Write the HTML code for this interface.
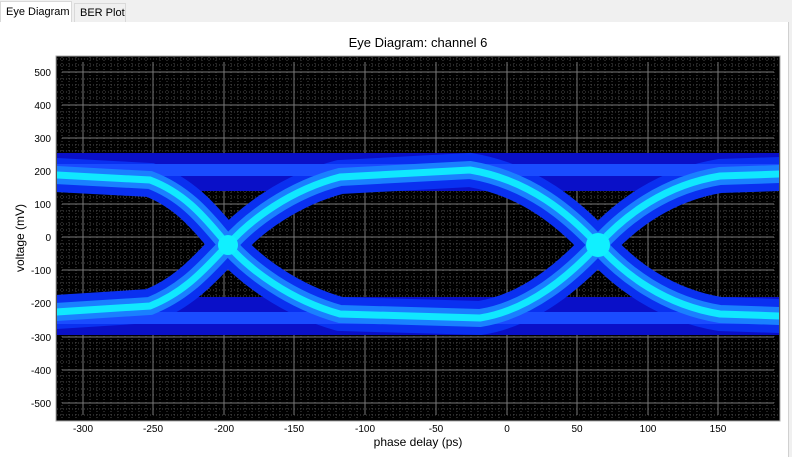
<!DOCTYPE html>
<html><head><meta charset="utf-8"><style>
body{margin:0;width:792px;height:457px;background:#f0f0f0;font-family:"Liberation Sans",sans-serif;overflow:hidden;position:relative}
.tabbar{position:absolute;left:0;top:0;width:792px;height:22px;background:#f0f0f0}
.tab{position:absolute;font-size:11px;color:#000;border:1px solid #d9d9d9;border-bottom:none;white-space:nowrap;overflow:hidden}
.panel{position:absolute;left:0;top:22px;width:788px;height:435px;background:#fff;border-right:1px solid #d0d0d0}
</style></head><body>
<div class="tabbar">
<div class="tab" style="left:0;top:1px;width:72px;height:21px;background:#fff;line-height:20px;padding-left:5px;box-sizing:border-box">Eye Diagram</div>
<div class="tab" style="left:74px;top:3px;width:52px;height:19px;background:#f0f0f0;line-height:19px;padding-left:5px;box-sizing:border-box">BER Plot</div>
</div>
<div class="panel"></div>
<svg width="792" height="457" style="position:absolute;left:0;top:0" font-family="Liberation Sans, sans-serif">
<defs>
<clipPath id="c"><rect x="57" y="57" width="722" height="363"/></clipPath>
</defs>
<text x="418" y="47" font-size="13" text-anchor="middle" fill="#000">Eye Diagram: channel 6</text>
<rect x="56" y="56" width="724" height="365" fill="#000" stroke="#aaa"/>
<g stroke="#4a4a4a" stroke-width="1" stroke-dasharray="1,2" clip-path="url(#c)">
<path d="M62 57V420M69 57V420M76 57V420M90 57V420M97 57V420M104 57V420M111 57V420M118 57V420M125 57V420M132 57V420M139 57V420M146 57V420M160 57V420M167 57V420M174 57V420M181 57V420M188 57V420M195 57V420M202 57V420M209 57V420M216 57V420M231 57V420M238 57V420M245 57V420M252 57V420M259 57V420M266 57V420M273 57V420M280 57V420M287 57V420M301 57V420M308 57V420M315 57V420M322 57V420M329 57V420M336 57V420M343 57V420M350 57V420M357 57V420M372 57V420M379 57V420M386 57V420M393 57V420M400 57V420M407 57V420M414 57V420M421 57V420M428 57V420M443 57V420M450 57V420M457 57V420M464 57V420M471 57V420M478 57V420M485 57V420M492 57V420M499 57V420M514 57V420M521 57V420M528 57V420M535 57V420M542 57V420M549 57V420M556 57V420M563 57V420M570 57V420M584 57V420M591 57V420M598 57V420M605 57V420M612 57V420M619 57V420M626 57V420M633 57V420M640 57V420M655 57V420M662 57V420M669 57V420M676 57V420M683 57V420M690 57V420M697 57V420M704 57V420M711 57V420M725 57V420M732 57V420M739 57V420M746 57V420M753 57V420M760 57V420M767 57V420M774 57V420"/>
<path d="M57 59H780M57 65H780M57 79H780M57 85H780M57 92H780M57 98H780M57 112H780M57 118H780M57 125H780M57 131H780M57 145H780M57 151H780M57 158H780M57 164H780M57 178H780M57 184H780M57 191H780M57 197H780M57 211H780M57 217H780M57 224H780M57 230H780M57 244H780M57 250H780M57 257H780M57 263H780M57 277H780M57 283H780M57 290H780M57 296H780M57 310H780M57 316H780M57 323H780M57 329H780M57 343H780M57 349H780M57 356H780M57 362H780M57 376H780M57 382H780M57 389H780M57 395H780M57 409H780M57 415H780"/>
</g>
<g stroke="#777" stroke-width="1">
<path d="M83 62V415M153 62V415M224 62V415M294 62V415M365 62V415M436 62V415M507 62V415M577 62V415M648 62V415M718 62V415"/>
<path d="M62 72H774M62 105H774M62 138H774M62 171H774M62 204H774M62 237H774M62 270H774M62 303H774M62 337H774M62 370H774M62 403H774"/>
</g>
<g clip-path="url(#c)" fill="none" stroke-linecap="butt">
<path d="M56 172H780M56 316H780" stroke="#0a10c8" stroke-width="38"/>
<g id="cv">
<path d="M56 175 L150 180 C190 195 210 225 228 245 C250 270 290 300 340 314 L480 318 C530 310 570 275 598 245 C625 215 665 185 720 176 L780 174"/>
<path d="M56 312 L150 306 C190 290 210 262 228 245 C250 220 290 190 340 177 L470 170 C530 180 570 215 598 245 C625 275 665 305 720 314 L780 316"/>
</g>
<use href="#cv" stroke="#0a30f0" stroke-width="34"/>
<path d="M56 170H780M56 318H780" stroke="#1a4cff" stroke-width="12"/>
<use href="#cv" stroke="#1a80ff" stroke-width="18"/>
<use href="#cv" stroke="#10e8ff" stroke-width="7"/>
<circle cx="228" cy="245" r="10" fill="#10f0ff"/>
<circle cx="598" cy="245" r="12" fill="#10f0ff"/>
</g>
<g font-size="10" fill="#000" text-anchor="end">
<text x="51" y="76">500</text><text x="51" y="109">400</text><text x="51" y="142">300</text><text x="51" y="175">200</text><text x="51" y="208">100</text><text x="51" y="241">0</text><text x="51" y="274">-100</text><text x="51" y="307">-200</text><text x="51" y="341">-300</text><text x="51" y="374">-400</text><text x="51" y="407">-500</text>
</g>
<g font-size="10" fill="#000" text-anchor="middle">
<text x="83" y="432">-300</text><text x="153" y="432">-250</text><text x="224" y="432">-200</text><text x="294" y="432">-150</text><text x="365" y="432">-100</text><text x="436" y="432">-50</text><text x="507" y="432">0</text><text x="577" y="432">50</text><text x="648" y="432">100</text><text x="718" y="432">150</text>
</g>
<text x="418" y="446" font-size="12" text-anchor="middle">phase delay (ps)</text>
<text transform="translate(24,238) rotate(-90)" font-size="12" text-anchor="middle">voltage (mV)</text>
</svg>
</body></html>
